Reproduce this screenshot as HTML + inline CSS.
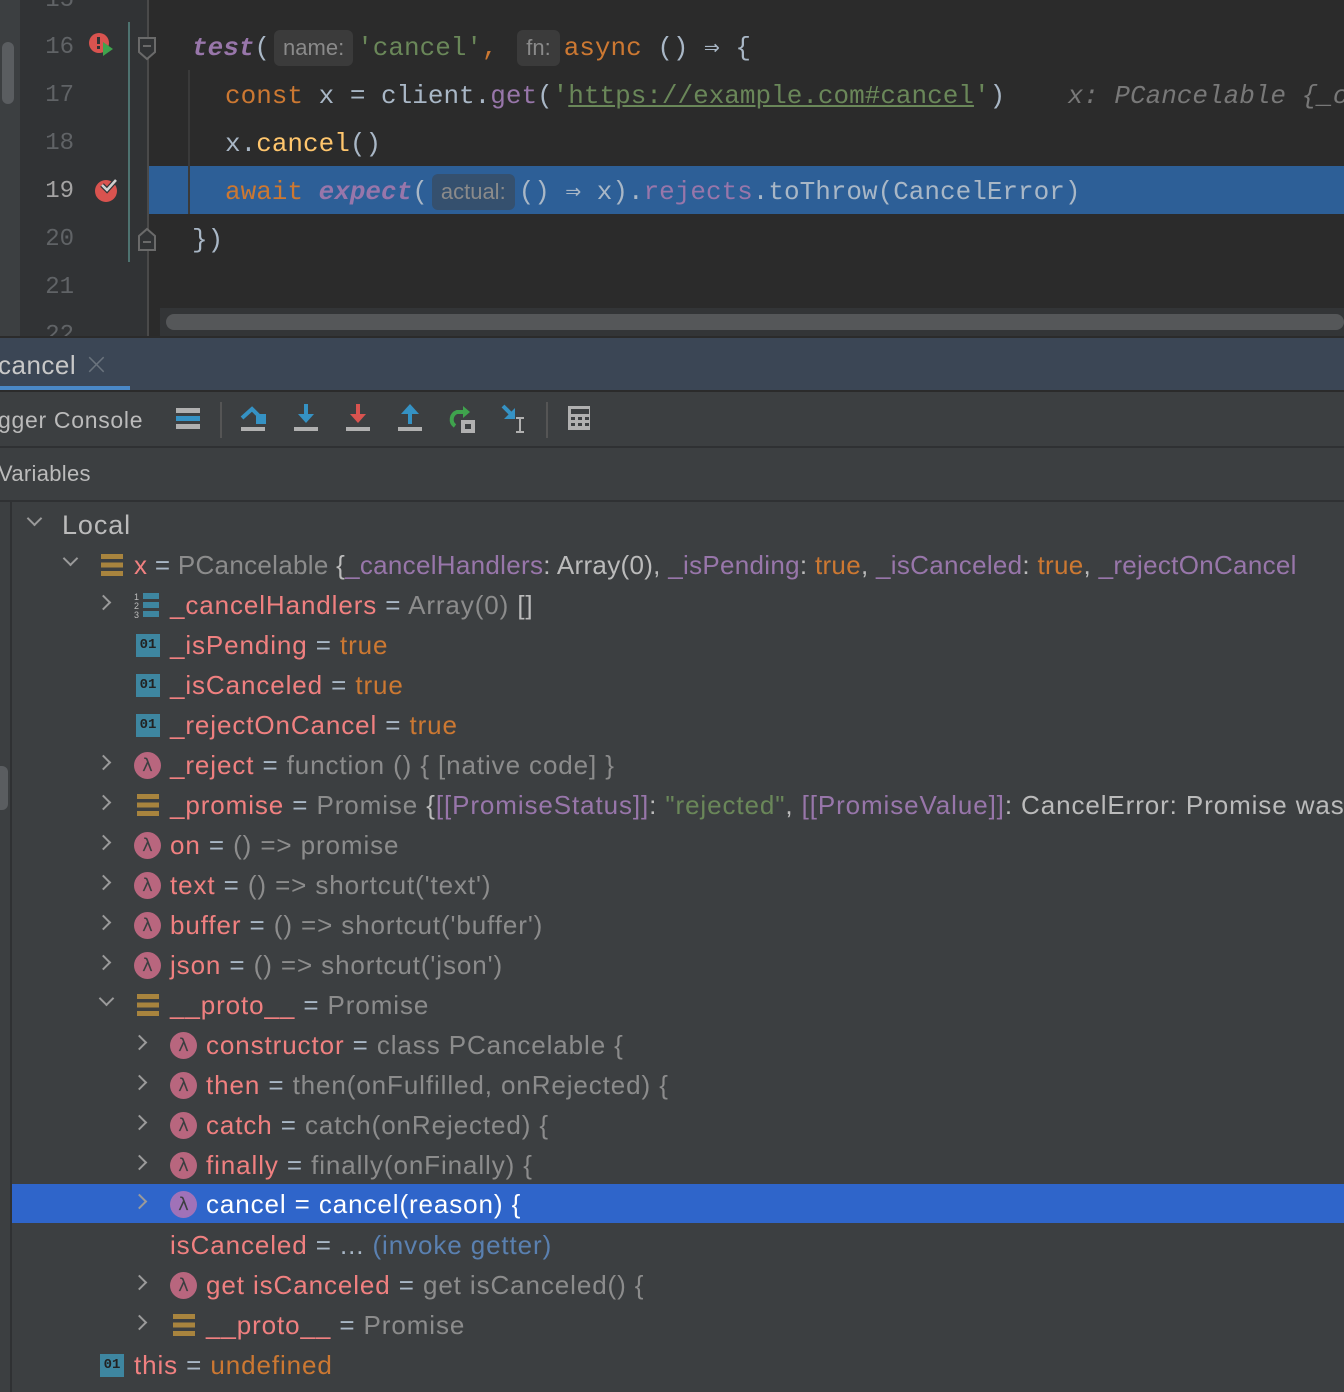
<!DOCTYPE html>
<html><head><meta charset="utf-8"><style>
*{margin:0;padding:0;box-sizing:border-box}
html,body{overflow:hidden}
body{width:1344px;height:1392px;background:#3c3f41;position:relative;font-family:"Liberation Sans",sans-serif}
.abs{position:absolute}
.code{font-family:"Liberation Mono",monospace;font-size:26px;color:#a9b7c6;white-space:pre;position:absolute;left:192px;right:0;overflow:hidden;height:48px;line-height:50px}
.ln{position:absolute;left:20px;width:54px;text-align:right;font-family:"Liberation Mono",monospace;font-size:24px;color:#606366;line-height:50px}
.hint{display:inline-block;background:#3b3b3b;color:#8a8a8a;font-family:"Liberation Sans",sans-serif;font-size:22px;border-radius:6px;padding:0 9px;line-height:36px;vertical-align:middle;margin:0 4px}
.kw{color:#cc7832}.fn{color:#9876aa;font-style:italic;font-weight:bold}.str{color:#6a8759}.m{color:#9876aa}.y{color:#ffc66d}
.row{position:absolute;left:0;right:0;height:40px;line-height:40px;font-size:26px;letter-spacing:0.9px;white-space:nowrap;color:#a9b7c6;overflow:hidden}
.n{color:#f08080}.v{color:#8c8c8c}.t{color:#cc7832}.p{color:#9876aa}.g{color:#6a8759}.w{color:#bbbbbb}
.chev{position:absolute;top:12px;width:11px;height:11px;border-right:2.5px solid #9a9a9a;border-bottom:2.5px solid #9a9a9a;transform:rotate(-45deg)}
.chev.d{transform:rotate(45deg);top:8px}
.lam{position:absolute;top:7px;width:27px;height:27px;border-radius:50%;background:#b8667e;color:#3c3f41;font-size:18px;line-height:27px;text-align:center;font-family:"DejaVu Sans",sans-serif;letter-spacing:0}
.fld{position:absolute;top:9px;width:24px;height:23px;background:#3e86a0;color:#222;font-size:14px;line-height:23px;text-align:center;font-weight:bold;font-family:"Liberation Mono",monospace;letter-spacing:0}
.stk{position:absolute;top:9px;width:22px;height:22px;background:linear-gradient(#a8843e 0 5px,transparent 5px 8.5px,#a8843e 8.5px 13.5px,transparent 13.5px 17px,#a8843e 17px 22px)}
.tx{position:absolute;top:0}
</style></head><body>
<div class="abs" style="left:0;top:0;width:1344px;height:338px;background:#2b2b2b"></div>
<div class="abs" style="left:0;top:0;width:20px;height:338px;background:#3c3f41"></div>
<div class="abs" style="left:2px;top:42px;width:12px;height:62px;border-radius:6px;background:#5a5d60"></div>
<div class="abs" style="left:20px;top:0;width:128px;height:338px;background:#313335"></div>
<div class="abs" style="left:128px;top:22px;width:2px;height:240px;background:#4e7370"></div>
<div class="abs" style="left:147px;top:0;width:2px;height:338px;background:#4a4a4a"></div>
<div class="abs" style="left:149px;top:166px;width:1195px;height:48px;background:#2d5f97"></div>
<div class="abs" style="left:188px;top:70px;width:2px;height:144px;background:#3a3a3a"></div>
<svg class="abs" style="left:137px;top:36px" width="22" height="26"><path d="M2 2h16v14l-8 7-8-7z" fill="#313335" stroke="#6a6a6a" stroke-width="2"/><path d="M6 10h8" stroke="#6a6a6a" stroke-width="2"/></svg>
<svg class="abs" style="left:137px;top:226px" width="22" height="26"><path d="M2 24h16V10L10 3 2 10z" fill="#313335" stroke="#6a6a6a" stroke-width="2"/><path d="M6 16h8" stroke="#6a6a6a" stroke-width="2"/></svg>
<svg class="abs" style="left:88px;top:32px" width="30" height="30"><circle cx="11" cy="11" r="10" fill="#d9534f"/><rect x="9" y="5" width="3" height="7" fill="#313335"/><rect x="9" y="14" width="3" height="3" fill="#313335"/><path d="M15 10l10 7-10 7z" fill="#3fa34d"/></svg>
<svg class="abs" style="left:92px;top:176px" width="30" height="30"><circle cx="14" cy="15" r="11" fill="#d9534f"/><path d="M10 9l5 5 9-10" fill="none" stroke="#313335" stroke-width="5"/><path d="M10 9l5 5 9-10" fill="none" stroke="#d0d0d0" stroke-width="2.5"/></svg>
<div class="ln" style="top:-24px">15</div>
<div class="ln" style="top:23px">16</div>
<div class="ln" style="top:71px">17</div>
<div class="ln" style="top:119px">18</div>
<div class="ln" style="top:167px;color:#a4a3a3">19</div>
<div class="ln" style="top:215px">20</div>
<div class="ln" style="top:263px">21</div>
<div class="ln" style="top:311px">22</div>
<div class="code" style="top:23px"><span class="fn">test</span>(<span class="hint">name:</span><span class="str">'cancel'</span><span class="kw">,</span> <span class="hint">fn:</span><span class="kw">async</span> () ⇒ {</div>
<div class="code" style="top:71px;left:225px"><span class="kw">const</span> x = client.<span class="m">get</span>(<span class="str">'<u>https://example.com#cancel</u>'</span>)    <span style="color:#787878;font-style:italic">x: PCancelable {_cancel</span></div>
<div class="code" style="top:119px;left:225px">x.<span class="y">cancel</span>()</div>
<div class="code" style="top:167px;left:225px"><span class="kw">await</span> <span class="fn">expect</span>(<span class="hint" style="background:#35506e">actual:</span>() ⇒ x).<span class="m">rejects</span>.toThrow(CancelError)</div>
<div class="code" style="top:215px">})</div>
<div class="abs" style="left:160px;top:308px;width:1184px;height:30px;background:#333537"></div>
<div class="abs" style="left:166px;top:314px;width:1178px;height:16px;border-radius:8px;background:#555759"></div>
<div class="abs" style="left:0;top:336px;width:1344px;height:2px;background:#2b2b2b"></div>
<div class="abs" style="left:0;top:338px;width:1344px;height:52px;background:#3b4655"></div>
<div class="abs" style="left:-2px;top:348px;font-size:26px;letter-spacing:0.5px;color:#c8c8c8;line-height:34px">cancel <span style="color:#6a737d;font-size:30px;font-family:'DejaVu Sans',sans-serif;font-weight:200">×</span></div>
<div class="abs" style="left:0;top:386px;width:130px;height:5px;background:#4a88c7"></div>
<div class="abs" style="left:0;top:390px;width:1344px;height:2px;background:#2b2b2b"></div>
<div class="abs" style="left:-2px;top:404px;font-size:23px;letter-spacing:0.7px;color:#bbbbbb;line-height:32px">gger Console</div>
<svg class="abs" style="left:170px;top:400px" width="420" height="40">
<rect x="6" y="8" width="24" height="5" fill="#b0b0b0"/><rect x="6" y="16" width="24" height="5" fill="#3592c4"/><rect x="6" y="24" width="24" height="5" fill="#b0b0b0"/>
<rect x="50" y="2" width="2" height="36" fill="#555"/>
<path d="M72 18l10-9 9 9" fill="none" stroke="#3592c4" stroke-width="4"/><path d="M86 14h10v10h-10z" fill="#3592c4"/><rect x="71" y="27" width="24" height="4" fill="#b0b0b0"/>
<path d="M136 4v14" stroke="#3592c4" stroke-width="4"/><path d="M128 14h16l-8 9z" fill="#3592c4"/><rect x="124" y="27" width="24" height="4" fill="#b0b0b0"/>
<path d="M188 4v14" stroke="#d9534f" stroke-width="4"/><path d="M180 14h16l-8 9z" fill="#d9534f"/><rect x="176" y="27" width="24" height="4" fill="#b0b0b0"/>
<path d="M240 12v12" stroke="#3592c4" stroke-width="4"/><path d="M231 14h18l-9-10z" fill="#3592c4"/><rect x="228" y="27" width="24" height="4" fill="#b0b0b0"/>
<path d="M285 26a8 8 0 0 1 2-14h8" fill="none" stroke="#3fa34d" stroke-width="4"/><path d="M293 6l7 6-7 6z" fill="#3fa34d"/><rect x="291" y="20" width="14" height="13" fill="#b0b0b0"/><rect x="295" y="24" width="6" height="5" fill="#3c3f41"/>
<path d="M333 6l9 9" stroke="#3592c4" stroke-width="4"/><path d="M345 8v11h-11z" fill="#3592c4"/><path d="M350 18v14M346 18h8M346 32h8" stroke="#b0b0b0" stroke-width="2"/>
<rect x="376" y="2" width="2" height="36" fill="#555"/>
<rect x="398" y="6" width="24" height="24" fill="#b0b0b0"/><rect x="401" y="9" width="18" height="5" fill="#3c3f41"/>
<g fill="#3c3f41"><rect x="401" y="17" width="4" height="3"/><rect x="408" y="17" width="4" height="3"/><rect x="415" y="17" width="4" height="3"/><rect x="401" y="23" width="4" height="3"/><rect x="408" y="23" width="4" height="3"/><rect x="415" y="23" width="4" height="3"/></g>
</svg>
<div class="abs" style="left:0;top:446px;width:1344px;height:2px;background:#2f3133"></div>
<div class="abs" style="left:-2px;top:458px;font-size:22px;letter-spacing:0.3px;color:#bbbbbb;line-height:32px">Variables</div>
<div class="abs" style="left:0;top:500px;width:1344px;height:2px;background:#2f3133"></div>
<div class="abs" style="left:10px;top:502px;width:2px;height:890px;background:#2f3133"></div>
<div class="abs" style="left:0;top:766px;width:8px;height:44px;border-radius:0 6px 6px 0;background:#5a5d60"></div>
<div class="row" style="top:505px"><div class="chev d" style="left:29px"></div><span class="tx w" style="left:62px;font-size:27px">Local</span></div>
<div class="row" style="top:545px"><div class="chev d" style="left:65px"></div><div class="stk" style="left:101px"></div><span class="tx" style="left:134px;letter-spacing:0.3px"><span class="n">x</span> = <span class="v">PCancelable</span> <span class="w">{</span><span class="p">_cancelHandlers</span><span class="w">: Array(0), </span><span class="p">_isPending</span><span class="w">: </span><span class="t">true</span><span class="w">, </span><span class="p">_isCanceled</span><span class="w">: </span><span class="t">true</span><span class="w">, </span><span class="p">_rejectOnCancel</span></span></div>
<div class="row" style="top:585px"><div class="chev" style="left:98px"></div><svg class="abs" style="left:134px;top:6px" width="28" height="28"><text x="0" y="9" font-size="9" fill="#bbb" font-family="Liberation Sans">1</text><text x="0" y="18" font-size="9" fill="#bbb" font-family="Liberation Sans">2</text><text x="0" y="27" font-size="9" fill="#bbb" font-family="Liberation Sans">3</text><rect x="9" y="2" width="16" height="6" fill="#3e86a0"/><rect x="9" y="11" width="16" height="6" fill="#3e86a0"/><rect x="9" y="20" width="16" height="6" fill="#3e86a0"/></svg><span class="tx" style="left:170px"><span class="n">_cancelHandlers</span> = <span class="v">Array(0)</span> <span class="w">[]</span></span></div>
<div class="row" style="top:625px"><div class="fld" style="left:136px">01</div><span class="tx" style="left:170px"><span class="n">_isPending</span> = <span class="t">true</span></span></div>
<div class="row" style="top:665px"><div class="fld" style="left:136px">01</div><span class="tx" style="left:170px"><span class="n">_isCanceled</span> = <span class="t">true</span></span></div>
<div class="row" style="top:705px"><div class="fld" style="left:136px">01</div><span class="tx" style="left:170px"><span class="n">_rejectOnCancel</span> = <span class="t">true</span></span></div>
<div class="row" style="top:745px"><div class="chev" style="left:98px"></div><div class="lam" style="left:134px">λ</div><span class="tx" style="left:170px"><span class="n">_reject</span> = <span class="v">function () { [native code] }</span></span></div>
<div class="row" style="top:785px"><div class="chev" style="left:98px"></div><div class="stk" style="left:137px"></div><span class="tx" style="left:170px"><span class="n">_promise</span> = <span class="v">Promise</span> <span class="w">{</span><span class="p">[[PromiseStatus]]</span><span class="w">: </span><span class="g">"rejected"</span><span class="w">, </span><span class="p">[[PromiseValue]]</span><span class="w">: CancelError: Promise was canceled</span></span></div>
<div class="row" style="top:825px"><div class="chev" style="left:98px"></div><div class="lam" style="left:134px">λ</div><span class="tx" style="left:170px"><span class="n">on</span> = <span class="v">() =&gt; promise</span></span></div>
<div class="row" style="top:865px"><div class="chev" style="left:98px"></div><div class="lam" style="left:134px">λ</div><span class="tx" style="left:170px"><span class="n">text</span> = <span class="v">() =&gt; shortcut('text')</span></span></div>
<div class="row" style="top:905px"><div class="chev" style="left:98px"></div><div class="lam" style="left:134px">λ</div><span class="tx" style="left:170px"><span class="n">buffer</span> = <span class="v">() =&gt; shortcut('buffer')</span></span></div>
<div class="row" style="top:945px"><div class="chev" style="left:98px"></div><div class="lam" style="left:134px">λ</div><span class="tx" style="left:170px"><span class="n">json</span> = <span class="v">() =&gt; shortcut('json')</span></span></div>
<div class="row" style="top:985px"><div class="chev d" style="left:101px"></div><div class="stk" style="left:137px"></div><span class="tx" style="left:170px"><span class="n">__proto__</span> = <span class="v">Promise</span></span></div>
<div class="row" style="top:1025px"><div class="chev" style="left:134px"></div><div class="lam" style="left:170px">λ</div><span class="tx" style="left:206px"><span class="n">constructor</span> = <span class="v">class PCancelable {</span></span></div>
<div class="row" style="top:1065px"><div class="chev" style="left:134px"></div><div class="lam" style="left:170px">λ</div><span class="tx" style="left:206px"><span class="n">then</span> = <span class="v">then(onFulfilled, onRejected) {</span></span></div>
<div class="row" style="top:1105px"><div class="chev" style="left:134px"></div><div class="lam" style="left:170px">λ</div><span class="tx" style="left:206px"><span class="n">catch</span> = <span class="v">catch(onRejected) {</span></span></div>
<div class="row" style="top:1145px"><div class="chev" style="left:134px"></div><div class="lam" style="left:170px">λ</div><span class="tx" style="left:206px"><span class="n">finally</span> = <span class="v">finally(onFinally) {</span></span></div>
<div class="row" style="top:1184px;left:12px;background:#2f65ca;height:39px"><div class="chev" style="left:122px"></div><div class="lam" style="left:158px;background:#a072b8">λ</div><span class="tx" style="left:194px;color:#fff">cancel = cancel(reason) {</span></div>
<div class="row" style="top:1225px"><span class="tx" style="left:170px"><span class="n">isCanceled</span> = ... <span style="color:#5a80b0">(invoke getter)</span></span></div>
<div class="row" style="top:1265px"><div class="chev" style="left:134px"></div><div class="lam" style="left:170px">λ</div><span class="tx" style="left:206px"><span class="n">get isCanceled</span> = <span class="v">get isCanceled() {</span></span></div>
<div class="row" style="top:1305px"><div class="chev" style="left:134px"></div><div class="stk" style="left:173px"></div><span class="tx" style="left:206px"><span class="n">__proto__</span> = <span class="v">Promise</span></span></div>
<div class="row" style="top:1345px"><div class="fld" style="left:100px">01</div><span class="tx" style="left:134px"><span class="n">this</span> = <span class="t">undefined</span></span></div>
</body></html>
